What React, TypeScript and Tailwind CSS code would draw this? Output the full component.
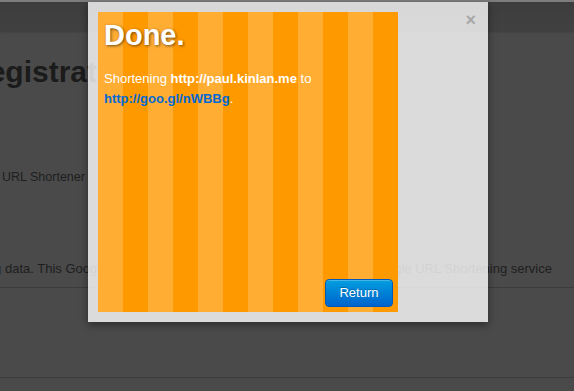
import type { ReactNode } from "react";

const stripes =
  "[background-image:repeating-linear-gradient(90deg,#ffad33_0px,#ffad33_25px,#ff9900_25px,#ff9900_50px)]";

function ReturnButton({ children }: { children: ReactNode }) {
  return (
    <button
      type="button"
      className="flex h-[28px] w-[68px] items-center justify-center rounded-[4px] border border-[#0058b8] bg-gradient-to-b from-[#079ee0] to-[#0063cc] text-[13px] text-white shadow-[inset_0_1px_0_rgba(255,255,255,0.25)] [text-shadow:0_-1px_0_rgba(0,0,0,0.25)]"
    >
      {children}
    </button>
  );
}

function DoneModal() {
  return (
    <div className="absolute left-[88px] top-[2px] w-[400px] bg-white/80 p-[10px] shadow-[0_3px_8px_rgba(0,0,0,0.4)]">
      <span className="absolute right-[12px] top-[9px] text-[18px] font-bold leading-[18px] text-[#a8a8a8]">
        ×
      </span>
      <div className={`flex h-[300px] w-[300px] flex-col pb-[5px] pl-[6px] pr-[5px] pt-[5px] ${stripes}`}>
        <h2 className="text-[29px] font-bold leading-[36px] text-white [text-shadow:1px_1px_3px_rgba(0,0,0,0.55)]">
          Done.
        </h2>
        <p className="mt-[16px] text-[13px] leading-[20px] text-white">
          Shortening <strong>http://paul.kinlan.me</strong> to{" "}
          <a className="font-bold text-[#0069d6]">http://goo.gl/nWBBg</a>.
        </p>
        <div className="mt-auto flex justify-end">
          <ReturnButton>Return</ReturnButton>
        </div>
      </div>
    </div>
  );
}

export default function App() {
  return (
    <div className="relative h-[391px] w-[574px] overflow-hidden bg-[#4a4a4a] font-['Liberation_Sans',Arial,sans-serif] text-[#1e1e1e]">
      <div className="h-[2px] bg-[#7d7d7d]" />
      <div className="h-[29px] bg-gradient-to-b from-[#3d3d3d] to-[#414141] shadow-[0_1px_2px_rgba(0,0,0,0.2)]" />

      <h1 className="ml-[-33px] mt-[23px] whitespace-nowrap text-[30px] font-bold leading-[36px] text-[#1b1b1b]">
        Registration
      </h1>
      <div className="ml-[2px] mt-[78px] text-[12.5px] leading-[18px]">URL Shortener</div>
      <p className="ml-[-16px] mt-[74px] whitespace-nowrap text-[13px] leading-[18px]">
        ing data. This Google Chrome extension, which only ever uses the Google URL Shortening service
      </p>
      <div className="mt-[9px] h-px bg-[#3c3c3c]" />
      <div className="mt-[89px] h-px bg-[#3c3c3c]" />

      <DoneModal />
    </div>
  );
}
